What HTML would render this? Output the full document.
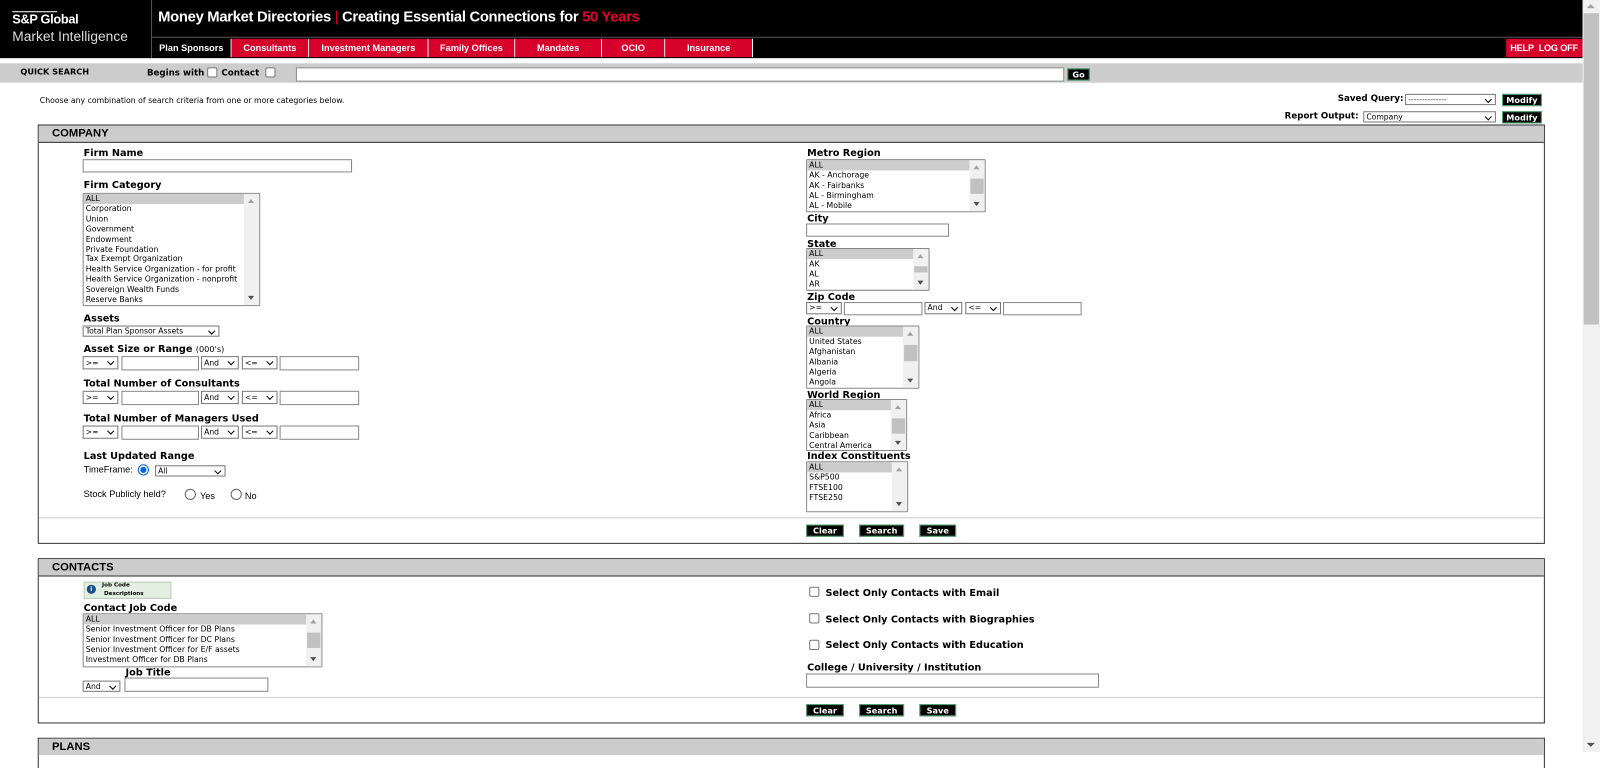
<!DOCTYPE html>
<html><head><meta charset="utf-8">
<style>
html,body{margin:0;padding:0;width:1600px;height:752px;overflow:hidden;background:#fff;}
#w{position:absolute;left:0;top:0;width:1568px;height:737px;transform:scale(1.0204);transform-origin:0 0;font-family:"DejaVu Sans","Liberation Sans",sans-serif;color:#000;}
.a{position:absolute}
.lb{position:absolute;font-weight:bold;font-size:9.5px;white-space:nowrap}
.tx{position:absolute;font-size:8px;white-space:nowrap}
.in{position:absolute;border:1px solid #888;background:#fff;box-sizing:border-box}
.sel{position:absolute;border:1px solid #777;background:#fff;box-sizing:border-box;font-size:7.5px;line-height:11px;padding-left:2px;white-space:nowrap;overflow:hidden}
.sel:after{content:"";position:absolute;right:4px;top:2px;width:4px;height:4px;border-right:1.5px solid #000;border-bottom:1.5px solid #000;transform:rotate(45deg)}
.list{position:absolute;border:1px solid #888;background:#fff;box-sizing:border-box;font-size:7.6px;line-height:9.9px;overflow:hidden;border-radius:1px}
.list div{padding-left:2px;white-space:nowrap}
.list div:first-child{background:#ccc}
.sb{position:absolute;right:0;top:0;bottom:0;width:15px;background:#f0f0f0}
.sb:before{content:"";position:absolute;left:4px;top:5px;border:3.5px solid transparent;border-bottom:4px solid #a0a0a0;border-top:0}
.sb:after{content:"";position:absolute;left:4px;bottom:5px;border:3.5px solid transparent;border-top:4px solid #505050;border-bottom:0}
.th{position:absolute;left:1px;right:1px;background:#c1c1c1}
.btn{position:absolute;background:#000;color:#fff;font-weight:bold;font-size:8px;text-align:center;line-height:11px;height:12px;border:1px solid #5a7;box-sizing:border-box}
.tab{position:absolute;top:38px;height:18px;background:#d6002a;color:#fff;font-family:"Liberation Sans",sans-serif;font-weight:bold;font-size:9px;line-height:18px;text-align:center;border-right:1px solid #fff;box-sizing:border-box;white-space:nowrap}
.box{position:absolute;left:37px;width:1477px;border:1px solid #333;box-sizing:border-box}
.hd{position:absolute;left:0;right:0;top:0;height:16px;background:#ccc;border-bottom:1px solid #333;font-family:"Liberation Sans",sans-serif;font-weight:bold;font-size:11px;line-height:16px;padding-left:13px}
.cb{position:absolute;width:8px;height:8px;border:1px solid #777;border-radius:2px;background:#fff}
.rad{position:absolute;width:9px;height:9px;border:1px solid #666;border-radius:50%;background:#fff}
</style></head><body><div id="w">

<div class="a" style="left:0;top:0;width:1551px;height:57px;background:#000"></div>
<div class="a" style="left:148px;top:0;width:1px;height:57px;background:#555"></div>
<div class="a" style="left:149px;top:36px;width:1402px;height:1px;background:#555"></div>
<div class="a" style="left:12px;top:11px;width:44px;height:1px;background:#fff"></div>
<div class="a" style="left:12px;top:12px;color:#fff;font-family:'Liberation Sans',sans-serif;font-weight:bold;font-size:12.5px;letter-spacing:-0.3px">S&amp;P Global</div>
<div class="a" style="left:12px;top:28px;color:#ddd;font-family:'Liberation Sans',sans-serif;font-size:13.5px">Market Intelligence</div>
<div class="a" style="left:155px;top:9px;color:#fff;font-family:'Liberation Sans',sans-serif;font-weight:bold;font-size:14.5px;letter-spacing:-0.3px">Money Market Directories <span style="color:#d6002a;font-weight:normal">|</span> Creating Essential Connections for <span style="color:#e8002c">50 Years</span></div>
<div class="tab" style="left:149px;width:78px;background:#000">Plan Sponsors</div>
<div class="tab" style="left:227px;width:76px">Consultants</div>
<div class="tab" style="left:303px;width:117px">Investment Managers</div>
<div class="tab" style="left:420px;width:85px">Family Offices</div>
<div class="tab" style="left:505px;width:85px">Mandates</div>
<div class="tab" style="left:590px;width:62px">OCIO</div>
<div class="tab" style="left:652px;width:86px">Insurance</div>
<div class="tab" style="left:1476px;width:75px;border:0;text-align:left;padding-left:4px;letter-spacing:-0.2px">HELP&nbsp;&nbsp;LOG OFF</div>

<div class="a" style="left:1551px;top:0;width:17px;height:737px;background:#f1f1f1"></div>
<div class="a" style="left:1552px;top:13px;width:15px;height:305px;background:#c1c1c1"></div>
<div class="a" style="left:1555px;top:4px;border:4px solid transparent;border-bottom:4px solid #a3a3a3;border-top:0"></div>
<div class="a" style="left:1555px;top:728px;border:4px solid transparent;border-top:4px solid #505050;border-bottom:0"></div>

<div class="a" style="left:0;top:62px;width:1551px;height:19px;background:#ccc"></div>
<div class="lb" style="left:20px;top:66px;font-size:8px">QUICK SEARCH</div>
<div class="lb" style="left:144px;top:67px;font-size:8.5px">Begins with</div>
<div class="cb" style="left:203px;top:66px"></div>
<div class="lb" style="left:217px;top:67px;font-size:8.5px">Contact</div>
<div class="cb" style="left:260px;top:66px"></div>
<div class="in" style="left:290px;top:66px;width:753px;height:14px"></div>
<div class="btn" style="left:1046px;top:67px;width:22px">Go</div>

<div class="tx" style="left:39px;top:94px;font-size:7.6px">Choose any combination of search criteria from one or more categories below.</div>
<div class="lb" style="left:1311px;top:92px;font-size:8.5px">Saved Query:</div>
<div class="sel" style="left:1377px;top:92px;width:89px;height:11px;line-height:9px;color:#333">--------------</div>
<div class="btn" style="left:1472px;top:92px;width:39px">Modify</div>
<div class="lb" style="left:1259px;top:109px;font-size:8.5px">Report Output:</div>
<div class="sel" style="left:1336px;top:109px;width:130px;height:11px;line-height:9px">Company</div>
<div class="btn" style="left:1472px;top:109px;width:39px">Modify</div>

<div class="box" style="top:122px;height:411px">
 <div class="hd">COMPANY</div>
 <div class="a" style="left:0;right:0;top:384px;height:1px;background:#ccc"></div>
</div>
<div class="lb" style="left:82px;top:145px">Firm Name</div>
<div class="in" style="left:81px;top:156px;width:264px;height:13px"></div>
<div class="lb" style="left:82px;top:176px">Firm Category</div>
<div class="list" style="left:81px;top:189px;width:174px;height:111px"><div>ALL</div><div>Corporation</div><div>Union</div><div>Government</div><div>Endowment</div><div>Private Foundation</div><div>Tax Exempt Organization</div><div>Health Service Organization - for profit</div><div>Health Service Organization - nonprofit</div><div>Sovereign Wealth Funds</div><div>Reserve Banks</div><span class="sb" style="background:#f0f0f0"></span></div>
<div class="lb" style="left:82px;top:307px">Assets</div>
<div class="sel" style="left:81px;top:319px;width:134px;height:11px;line-height:9px">Total Plan Sponsor Assets</div>
<div class="lb" style="left:82px;top:337px">Asset Size or Range <span style="font-weight:normal;font-size:8px">(000's)</span></div>
<div class="lb" style="left:82px;top:371px">Total Number of Consultants</div>
<div class="lb" style="left:82px;top:405px">Total Number of Managers Used</div>
<div class="lb" style="left:82px;top:442px">Last Updated Range</div>
<div class="tx" style="left:82px;top:455px;font-family:'Liberation Sans',sans-serif;font-size:9px">TimeFrame:</div>
<div class="a" style="left:135px;top:455px;width:9px;height:9px;border-radius:50%;border:1px solid #0a66d6;background:radial-gradient(circle,#0a66d6 45%,#fff 50%)"></div>
<div class="sel" style="left:152px;top:456px;width:69px;height:11px;line-height:9px">All</div>
<div class="tx" style="left:82px;top:479px;font-family:'Liberation Sans',sans-serif;font-size:9px">Stock Publicly held?</div>
<div class="rad" style="left:181px;top:479px"></div>
<div class="tx" style="left:196px;top:481px;font-family:'Liberation Sans',sans-serif;font-size:9px">Yes</div>
<div class="rad" style="left:226px;top:479px"></div>
<div class="tx" style="left:240px;top:481px;font-family:'Liberation Sans',sans-serif;font-size:9px">No</div>

<div class="lb" style="left:791px;top:145px">Metro Region</div>
<div class="list" style="left:790px;top:156px;width:176px;height:52px"><div>ALL</div><div>AK - Anchorage</div><div>AK - Fairbanks</div><div>AL - Birmingham</div><div>AL - Mobile</div><span class="sb"><span class="th" style="top:18px;height:15px"></span></span></div>
<div class="lb" style="left:791px;top:209px">City</div>
<div class="in" style="left:790px;top:219px;width:140px;height:13px"></div>
<div class="lb" style="left:791px;top:234px">State</div>
<div class="list" style="left:790px;top:243px;width:121px;height:42px"><div>ALL</div><div>AK</div><div>AL</div><div>AR</div><span class="sb"><span class="th" style="top:17px;height:6px"></span></span></div>
<div class="lb" style="left:791px;top:286px">Zip Code</div>
<div class="lb" style="left:791px;top:310px">Country</div>
<div class="list" style="left:790px;top:319px;width:111px;height:62px"><div>ALL</div><div>United States</div><div>Afghanistan</div><div>Albania</div><div>Algeria</div><div>Angola</div><span class="sb"><span class="th" style="top:18px;height:16px"></span></span></div>
<div class="lb" style="left:791px;top:382px">World Region</div>
<div class="list" style="left:790px;top:391px;width:99px;height:51px"><div>ALL</div><div>Africa</div><div>Asia</div><div>Caribbean</div><div>Central America</div><span class="sb"><span class="th" style="top:18px;height:15px"></span></span></div>
<div class="lb" style="left:791px;top:442px">Index Constituents</div>
<div class="list" style="left:790px;top:452px;width:100px;height:50px"><div>ALL</div><div>S&amp;P500</div><div>FTSE100</div><div>FTSE250</div><span class="sb"></span></div>

<div class="btn" style="left:790px;top:514px;width:37px">Clear</div>
<div class="btn" style="left:842px;top:514px;width:44px">Search</div>
<div class="btn" style="left:901px;top:514px;width:36px">Save</div>

<div class="box" style="top:547px;height:162px">
 <div class="hd">CONTACTS</div>
 <div class="a" style="left:0;right:0;top:135px;height:1px;background:#ccc"></div>
</div>
<div class="a" style="left:82px;top:570px;width:86px;height:17px;background:#e3efe0;border:1px solid #bcb;box-sizing:border-box"></div>
<div class="a" style="left:85px;top:573px;width:9px;height:9px;border-radius:50%;background:#1a4f8f;color:#fff;font-size:6px;text-align:center;line-height:9px;font-weight:bold">i</div>
<div class="tx" style="left:100px;top:570px;font-size:5.5px;font-weight:bold;line-height:8px">Job Code<br>&nbsp;Descriptions</div>
<div class="lb" style="left:82px;top:591px">Contact Job Code</div>
<div class="list" style="left:81px;top:601px;width:235px;height:53px"><div>ALL</div><div>Senior Investment Officer for DB Plans</div><div>Senior Investment Officer for DC Plans</div><div>Senior Investment Officer for E/F assets</div><div>Investment Officer for DB Plans</div><span class="sb"><span class="th" style="top:18px;height:15px"></span></span></div>
<div class="lb" style="left:123px;top:654px">Job Title</div>
<div class="sel" style="left:81px;top:667px;width:37px;height:11px;line-height:9px">And</div>
<div class="in" style="left:122px;top:664px;width:141px;height:14px"></div>

<div class="cb" style="left:793px;top:575px"></div>
<div class="lb" style="left:809px;top:576px">Select Only Contacts with Email</div>
<div class="cb" style="left:793px;top:601px"></div>
<div class="lb" style="left:809px;top:602px">Select Only Contacts with Biographies</div>
<div class="cb" style="left:793px;top:627px"></div>
<div class="lb" style="left:809px;top:627px">Select Only Contacts with Education</div>
<div class="lb" style="left:791px;top:649px">College / University / Institution</div>
<div class="in" style="left:790px;top:660px;width:287px;height:14px"></div>
<div class="btn" style="left:790px;top:690px;width:37px">Clear</div>
<div class="btn" style="left:842px;top:690px;width:44px">Search</div>
<div class="btn" style="left:901px;top:690px;width:36px">Save</div>

<div class="box" style="top:723px;height:30px;border-bottom:0">
 <div class="hd" style="border-bottom:0">PLANS</div>
</div>

<div class="sel" style="left:81px;top:349px;width:35px;height:13px">&gt;=</div>
<div class="in" style="left:119px;top:349px;width:76px;height:14px"></div>
<div class="sel" style="left:197px;top:349px;width:37px;height:13px">And</div>
<div class="sel" style="left:237px;top:349px;width:35px;height:13px">&lt;=</div>
<div class="in" style="left:274px;top:349px;width:78px;height:14px"></div>

<div class="sel" style="left:81px;top:383px;width:35px;height:13px">&gt;=</div>
<div class="in" style="left:119px;top:383px;width:76px;height:14px"></div>
<div class="sel" style="left:197px;top:383px;width:37px;height:13px">And</div>
<div class="sel" style="left:237px;top:383px;width:35px;height:13px">&lt;=</div>
<div class="in" style="left:274px;top:383px;width:78px;height:14px"></div>

<div class="sel" style="left:81px;top:417px;width:35px;height:13px">&gt;=</div>
<div class="in" style="left:119px;top:417px;width:76px;height:14px"></div>
<div class="sel" style="left:197px;top:417px;width:37px;height:13px">And</div>
<div class="sel" style="left:237px;top:417px;width:35px;height:13px">&lt;=</div>
<div class="in" style="left:274px;top:417px;width:78px;height:14px"></div>

<div class="sel" style="left:790px;top:296px;width:35px;height:12px;line-height:10px">&gt;=</div>
<div class="in" style="left:827px;top:296px;width:77px;height:13px"></div>
<div class="sel" style="left:906px;top:296px;width:37px;height:12px;line-height:10px">And</div>
<div class="sel" style="left:946px;top:296px;width:35px;height:12px;line-height:10px">&lt;=</div>
<div class="in" style="left:983px;top:296px;width:77px;height:13px"></div>

</div></body></html>
